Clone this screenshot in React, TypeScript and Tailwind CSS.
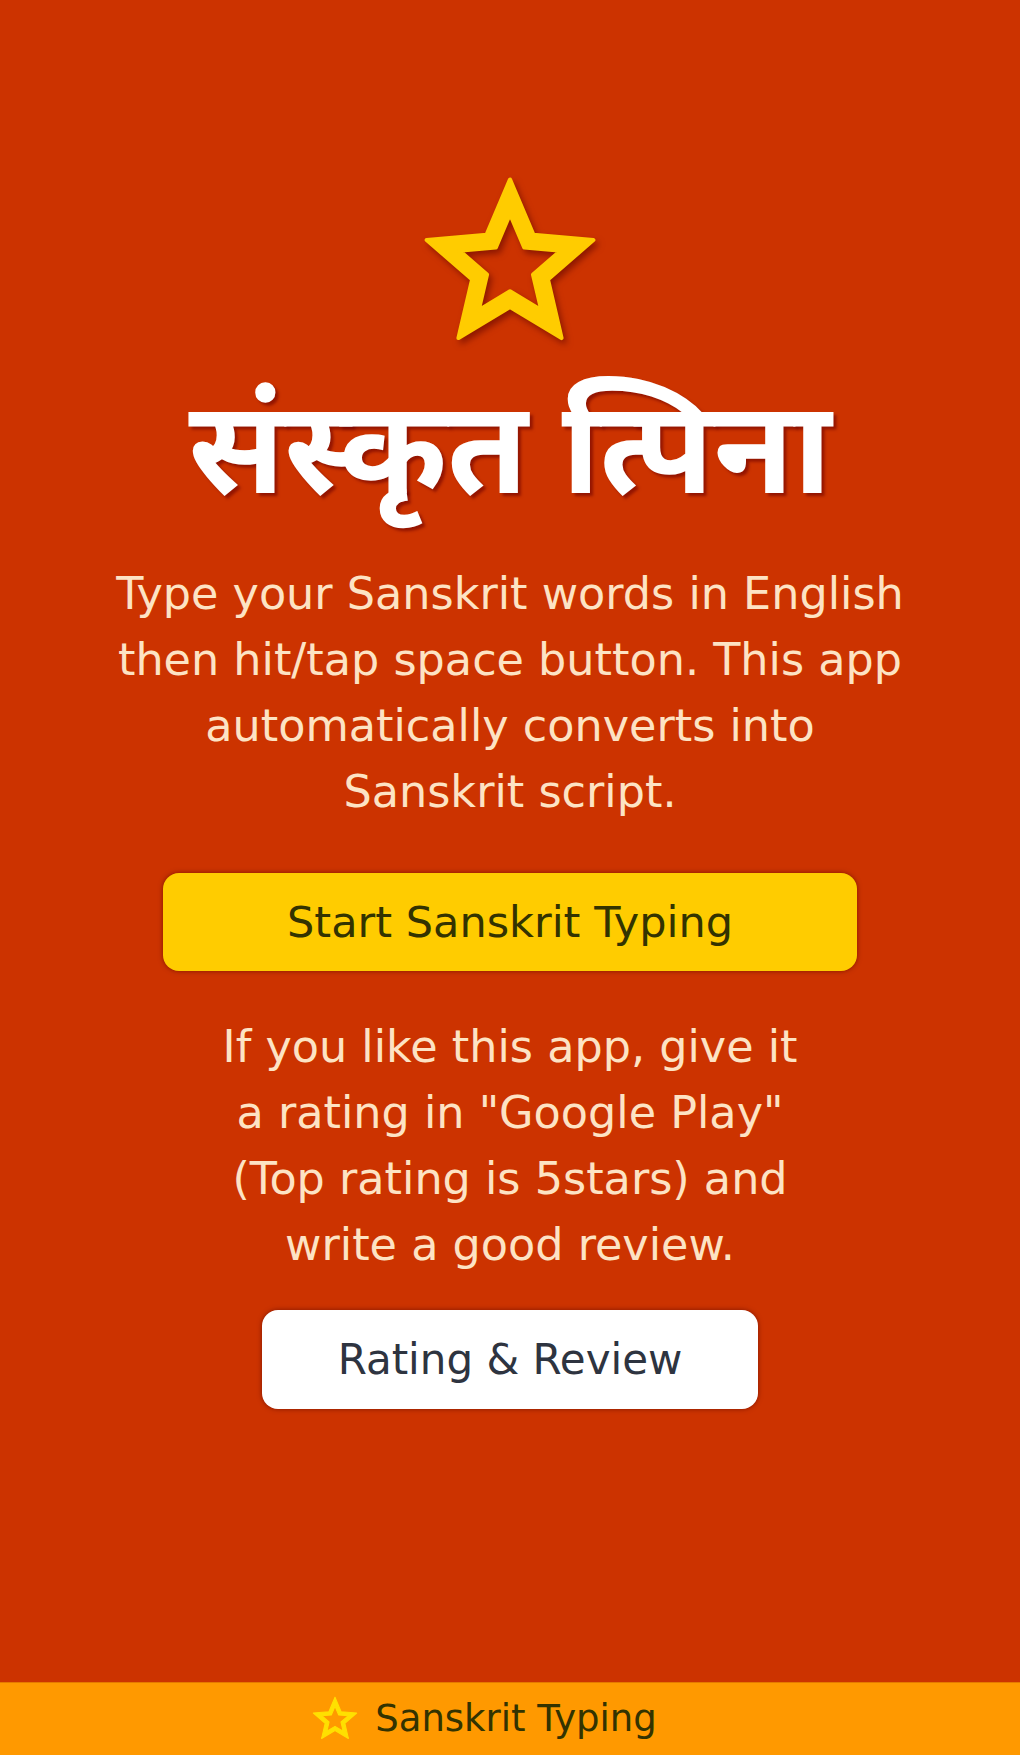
const StarOutline = ({ className }: { className?: string }) => (
  <svg viewBox="0 0 24 24" className={className} fill="currentColor" stroke="currentColor" strokeWidth={0.5} strokeLinejoin="round">
    <path d="M22 9.24l-7.19-.62L12 2 9.19 8.63 2 9.24l5.46 4.73L5.82 21 12 17.27 18.18 21l-1.63-7.03L22 9.24zM12 15.4l-3.76 2.27 1-4.28-3.32-2.88 4.38-.38L12 6.1l1.71 4.04 4.38.38-3.32 2.88 1 4.28L12 15.4z" />
  </svg>
);

export default function App() {
  return (
    <div className="h-screen flex flex-col bg-[#cc3300] font-['DejaVu_Sans',Verdana,sans-serif]">
      <main className="flex-1 flex flex-col items-center text-center">
        <StarOutline className="mt-[163px] w-[200px] h-[200px] text-[#ffcc00] drop-shadow-[3px_4px_3px_rgba(90,0,0,0.55)]" />

        <h1 className="mt-[24px] text-[130px] leading-[150px] font-bold text-white font-['Noto_Sans_Devanagari','Lohit_Devanagari','FreeSans',sans-serif] [text-shadow:3px_3px_3px_rgba(110,0,0,0.6)]">
          संस्कृत त्पिना
        </h1>

        <p className="mt-[24px] text-[44.5px] leading-[66px] text-[#fde3c4]">
          Type your Sanskrit words in English
          <br />
          then hit/tap space button. This app
          <br />
          automatically converts into
          <br />
          Sanskrit script.
        </p>

        <button className="mt-[48px] w-[694px] h-[98px] rounded-[16px] bg-[#ffcc00] text-[43px] text-[#333300] shadow-[0_0_5px_rgba(80,0,0,0.6)]">
          Start Sanskrit Typing
        </button>

        <p className="mt-[43px] text-[44.5px] leading-[66px] text-[#fde3c4]">
          If you like this app, give it
          <br />
          a rating in "Google Play"
          <br />
          (Top rating is 5stars) and
          <br />
          write a good review.
        </p>

        <button className="mt-[32px] w-[496px] h-[99px] rounded-[16px] bg-white text-[42px] text-[#2e3440] shadow-[0_0_5px_rgba(80,0,0,0.6)]">
          Rating &amp; Review
        </button>
      </main>

      <footer className="h-[73px] shrink-0 bg-[#ff9900] flex items-center justify-center gap-[14px] pr-[54px] border-t border-[#e67a00]">
        <StarOutline className="w-[52px] h-[52px] text-[#ffe000]" />
        <span className="text-[37px] text-[#333300]">Sanskrit Typing</span>
      </footer>
    </div>
  );
}
